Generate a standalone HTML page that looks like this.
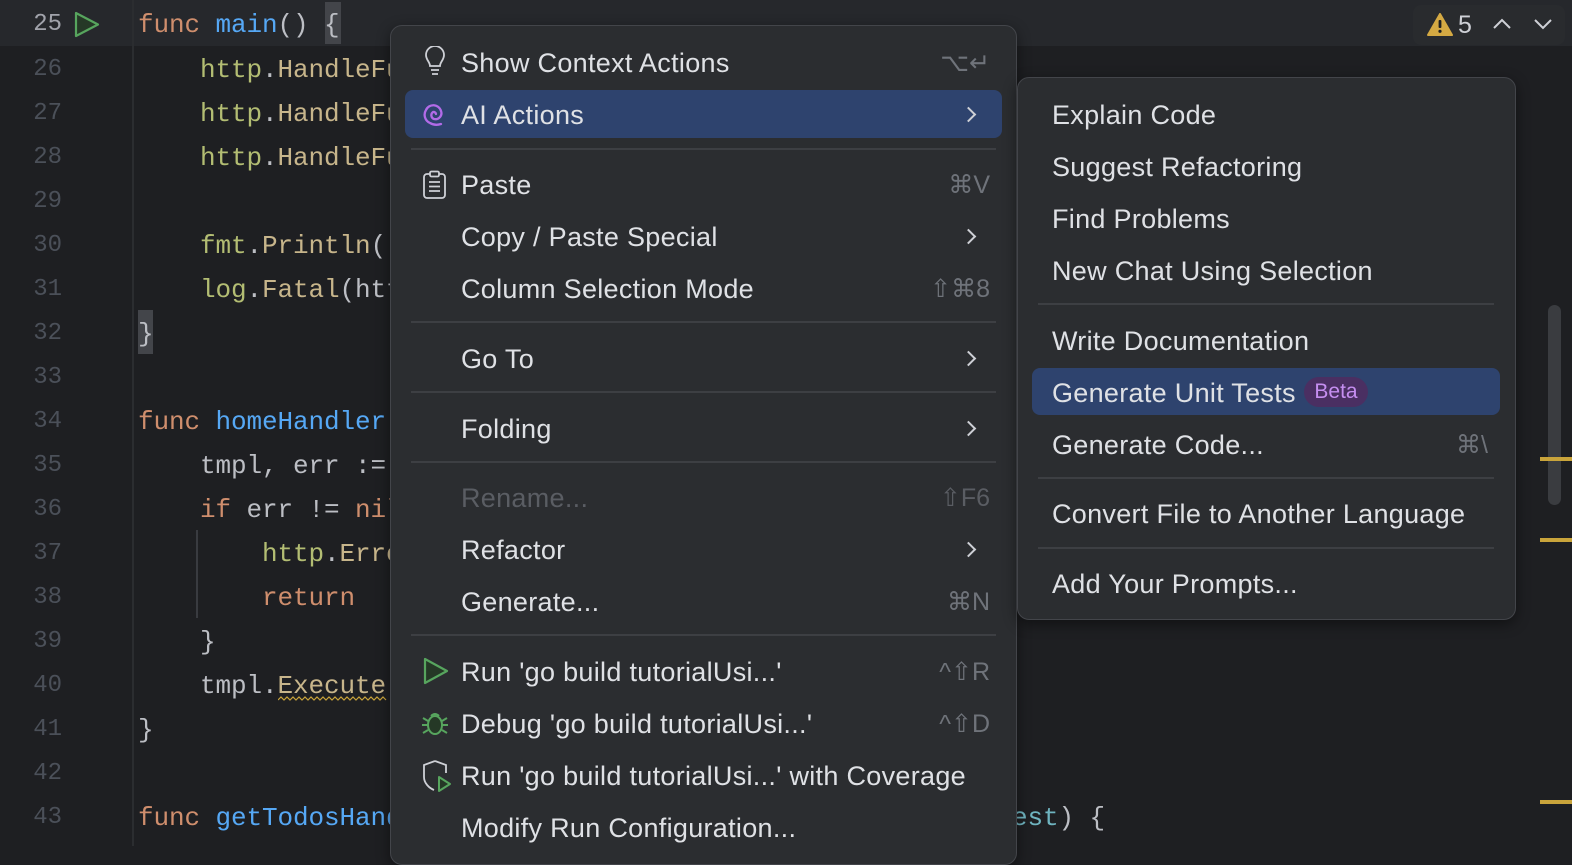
<!DOCTYPE html>
<html><head><meta charset="utf-8">
<style>
*{margin:0;padding:0;box-sizing:border-box}
body{width:1572px;height:846px;overflow:hidden;background:#1e1f22;position:relative;font-family:"Liberation Sans",sans-serif}
.ln{position:absolute;left:30px;width:32px;text-align:right;font:24px "Liberation Mono",monospace;color:#4b5059;line-height:44px}
.code{position:absolute;font:26px "Liberation Mono",monospace;color:#bcbec4;line-height:44px;white-space:pre;letter-spacing:-0.1px}
.k{color:#cf8e6d}.f{color:#56a8f5}.p{color:#b3bd73}.m{color:#c7b58b}.t{color:#6fb4c0}
.menu{position:absolute;background:#2b2d30;border:1.5px solid #43454a;border-radius:12px;box-shadow:0 4px 14px rgba(0,0,0,.45)}
.it{position:absolute;font-size:27px;letter-spacing:0.3px;color:#dfe1e5;line-height:52px;white-space:nowrap}
.sc{position:absolute;font-size:25px;color:#6f737a;line-height:52px;text-align:right;white-space:nowrap}
.sep{position:absolute;height:2px;background:#3d3f43}
.arr{position:absolute;width:11px;height:11px;border-right:2px solid #ced0d6;border-top:2px solid #ced0d6;transform:rotate(45deg)}
svg{position:absolute}
</style></head><body>
<div style="position:absolute;left:0;top:0;width:1572px;height:46px;background:#26282c"></div>
<div style="position:absolute;left:132px;top:0;width:2px;height:846px;background:#2b2d30"></div>
<div style="position:absolute;left:325px;top:2px;width:16px;height:42px;background:#43454a"></div>
<div style="position:absolute;left:138px;top:310px;width:15px;height:44px;background:#43454a"></div>
<div style="position:absolute;left:196px;top:530px;width:2px;height:88px;background:#393b40"></div>

<div class="ln" style="top:3px;color:#a1a3ab">25</div>
<div class="ln" style="top:48px">26</div><div class="ln" style="top:92px">27</div><div class="ln" style="top:136px">28</div>
<div class="ln" style="top:180px">29</div><div class="ln" style="top:224px">30</div><div class="ln" style="top:268px">31</div>
<div class="ln" style="top:312px">32</div><div class="ln" style="top:356px">33</div><div class="ln" style="top:400px">34</div>
<div class="ln" style="top:444px">35</div><div class="ln" style="top:488px">36</div><div class="ln" style="top:532px">37</div>
<div class="ln" style="top:576px">38</div><div class="ln" style="top:620px">39</div><div class="ln" style="top:664px">40</div>
<div class="ln" style="top:708px">41</div><div class="ln" style="top:752px">42</div><div class="ln" style="top:796px">43</div>
<svg style="left:74px;top:11px" width="26" height="27" viewBox="0 0 26 27"><path d="M2 2 L24 13.5 L2 25 Z" fill="#253826" stroke="#57a55e" stroke-width="2.2" stroke-linejoin="round"/></svg>

<div class="code" style="left:138px;top:3px"><span class="k">func</span> <span class="f">main</span>() {</div>
<div class="code" style="left:200px;top:48px"><span class="p">http</span>.<span class="m">HandleFunc</span></div>
<div class="code" style="left:200px;top:92px"><span class="p">http</span>.<span class="m">HandleFunc</span></div>
<div class="code" style="left:200px;top:136px"><span class="p">http</span>.<span class="m">HandleFunc</span></div>
<div class="code" style="left:200px;top:224px"><span class="p">fmt</span>.<span class="m">Println</span>(</div>
<div class="code" style="left:200px;top:268px"><span class="p">log</span>.<span class="m">Fatal</span>(htt</div>
<div class="code" style="left:138px;top:312px">}</div>
<div class="code" style="left:138px;top:400px"><span class="k">func</span> <span class="f">homeHandler</span></div>
<div class="code" style="left:200px;top:444px">tmpl, err :=</div>
<div class="code" style="left:200px;top:488px"><span class="k">if</span> err != <span class="k">nil</span></div>
<div class="code" style="left:262px;top:532px"><span class="p">http</span>.<span class="m">Error</span></div>
<div class="code" style="left:262px;top:576px"><span class="k">return</span></div>
<div class="code" style="left:200px;top:620px">}</div>
<div class="code" style="left:200px;top:664px">tmpl.<span class="m">Execute</span></div>
<svg style="left:278px;top:696px" width="110" height="6"><path d="M0 4 l3 -3 l3 3 l3 -3 l3 3 l3 -3 l3 3 l3 -3 l3 3 l3 -3 l3 3 l3 -3 l3 3 l3 -3 l3 3 l3 -3 l3 3 l3 -3 l3 3 l3 -3 l3 3 l3 -3 l3 3 l3 -3 l3 3 l3 -3 l3 3 l3 -3 l3 3 l3 -3 l3 3 l3 -3 l3 3 l3 -3 l3 3 l3 -3 l3 3" fill="none" stroke="#c9a43b" stroke-width="1.2"/></svg>
<div class="code" style="left:138px;top:708px">}</div>
<div class="code" style="left:138px;top:796px"><span class="k">func</span> <span class="f">getTodosHandler</span></div>
<div class="code" style="left:1012px;top:796px"><span class="t">est</span>) {</div>

<div style="position:absolute;left:1413px;top:5px;width:152px;height:40px;background:#2b2d30;border-radius:8px;opacity:.6"></div>
<svg style="left:1427px;top:13px" width="26" height="24" viewBox="0 0 26 24"><path d="M13 1 L25 22 L1 22 Z" fill="#d4a943" stroke="#d4a943" stroke-width="2" stroke-linejoin="round"/><rect x="11.6" y="7" width="2.8" height="8" rx="1" fill="#1e1f22"/><circle cx="13" cy="18.3" r="1.6" fill="#1e1f22"/></svg>
<div style="position:absolute;left:1458px;top:11px;font-size:25px;color:#ced0d6">5</div>
<svg style="left:1492px;top:18px" width="20" height="12"><path d="M2 10 L10 2 L18 10" fill="none" stroke="#ced0d6" stroke-width="2"/></svg>
<svg style="left:1533px;top:18px" width="20" height="12"><path d="M2 2 L10 10 L18 2" fill="none" stroke="#ced0d6" stroke-width="2"/></svg>
<div style="position:absolute;left:1548px;top:305px;width:13px;height:200px;background:#3a3c40;border-radius:7px"></div>
<div style="position:absolute;left:1540px;top:457px;width:32px;height:4px;background:#c9a43b"></div>
<div style="position:absolute;left:1540px;top:538px;width:32px;height:4px;background:#c9a43b"></div>
<div style="position:absolute;left:1540px;top:800px;width:32px;height:4px;background:#c9a43b"></div>

<div class="menu" style="left:390px;top:25px;width:627px;height:840px"></div>
<div style="position:absolute;left:405px;top:90px;width:597px;height:48px;background:#2e436e;border-radius:8px"></div>
<svg style="left:423px;top:46px" width="24" height="32" viewBox="0 0 24 32"><path d="M7 20 C7 16 3 14 3 9 A9 9 0 0 1 21 9 C21 14 17 16 17 20 Z" fill="none" stroke="#ced0d6" stroke-width="1.8"/><path d="M8 24 H16 M9 28 H15" stroke="#ced0d6" stroke-width="1.8"/></svg>
<svg style="left:421px;top:101px" width="28" height="26" viewBox="0 0 28 26"><path d="M15 13 A2.5 2.5 0 0 0 12 11 A4 4 0 0 0 13 18 A6 6 0 0 0 20 10 A8 8 0 0 0 5 9 A9 9 0 0 0 9 22 Q14 25 20 23" fill="none" stroke="#b26be8" stroke-width="2.3" stroke-linecap="round"/></svg>
<svg style="left:422px;top:170px" width="26" height="30" viewBox="0 0 26 30"><rect x="2" y="4" width="21" height="24" rx="3" fill="none" stroke="#ced0d6" stroke-width="1.8"/><rect x="8" y="1.5" width="9" height="5" rx="1.5" fill="#2b2d30" stroke="#ced0d6" stroke-width="1.8"/><path d="M7 12 H18 M7 16.5 H18 M7 21 H18" stroke="#ced0d6" stroke-width="1.8"/></svg>
<svg style="left:422px;top:657px" width="28" height="28" viewBox="0 0 28 28"><path d="M3 2 L25 14 L3 26 Z" fill="#253826" stroke="#57a55e" stroke-width="2.2" stroke-linejoin="round"/></svg>
<svg style="left:420px;top:708px" width="30" height="30" viewBox="0 0 30 30"><ellipse cx="15" cy="17" rx="7" ry="9" fill="#253826" stroke="#57a55e" stroke-width="2"/><path d="M11 8 Q15 4 19 8 M2 17 H8 M22 17 H28 M3 10 L8 13 M27 10 L22 13 M3 25 L8 22 M27 25 L22 22" fill="none" stroke="#57a55e" stroke-width="2"/></svg>
<svg style="left:422px;top:759px" width="30" height="34" viewBox="0 0 30 34"><path d="M13 2 L24 6 V14 M13 2 L2 6 V18 C2 24 7 29 12 31" fill="none" stroke="#ced0d6" stroke-width="1.8"/><path d="M17 18 L28 25 L17 32 Z" fill="#253826" stroke="#57a55e" stroke-width="2" stroke-linejoin="round"/></svg>

<div class="it" style="left:461px;top:37px">Show Context Actions</div>
<div class="sc" style="left:880px;width:110px;top:37px">⌥↵</div>
<div class="it" style="left:461px;top:89px">AI Actions</div>
<div class="arr" style="left:963px;top:109px"></div>
<div class="sep" style="left:411px;top:148px;width:585px"></div>
<div class="it" style="left:461px;top:159px">Paste</div>
<div class="sc" style="left:880px;width:110px;top:159px">⌘V</div>
<div class="it" style="left:461px;top:211px">Copy / Paste Special</div>
<div class="arr" style="left:963px;top:231px"></div>
<div class="it" style="left:461px;top:263px">Column Selection Mode</div>
<div class="sc" style="left:880px;width:110px;top:263px">⇧⌘8</div>
<div class="sep" style="left:411px;top:321px;width:585px"></div>
<div class="it" style="left:461px;top:333px">Go To</div>
<div class="arr" style="left:963px;top:353px"></div>
<div class="sep" style="left:411px;top:391px;width:585px"></div>
<div class="it" style="left:461px;top:403px">Folding</div>
<div class="arr" style="left:963px;top:423px"></div>
<div class="sep" style="left:411px;top:461px;width:585px"></div>
<div class="it" style="left:461px;top:472px;color:#5a5d63">Rename...</div>
<div class="sc" style="left:880px;width:110px;top:472px;color:#5a5d63">⇧F6</div>
<div class="it" style="left:461px;top:524px">Refactor</div>
<div class="arr" style="left:963px;top:544px"></div>
<div class="it" style="left:461px;top:576px">Generate...</div>
<div class="sc" style="left:880px;width:110px;top:576px">⌘N</div>
<div class="sep" style="left:411px;top:634px;width:585px"></div>
<div class="it" style="left:461px;top:646px">Run 'go build tutorialUsi...'</div>
<div class="sc" style="left:880px;width:110px;top:646px">^⇧R</div>
<div class="it" style="left:461px;top:698px">Debug 'go build tutorialUsi...'</div>
<div class="sc" style="left:880px;width:110px;top:698px">^⇧D</div>
<div class="it" style="left:461px;top:750px">Run 'go build tutorialUsi...' with Coverage</div>
<div class="it" style="left:461px;top:802px">Modify Run Configuration...</div>

<div class="menu" style="left:1017px;top:77px;width:499px;height:543px"></div>
<div style="position:absolute;left:1032px;top:368px;width:468px;height:47px;background:#2e436e;border-radius:8px"></div>
<div class="it" style="left:1052px;top:89px">Explain Code</div>
<div class="it" style="left:1052px;top:141px">Suggest Refactoring</div>
<div class="it" style="left:1052px;top:193px">Find Problems</div>
<div class="it" style="left:1052px;top:245px">New Chat Using Selection</div>
<div class="sep" style="left:1038px;top:303px;width:456px"></div>
<div class="it" style="left:1052px;top:315px">Write Documentation</div>
<div class="it" style="left:1052px;top:367px">Generate Unit Tests</div>
<div style="position:absolute;left:1304px;top:377px;width:64px;height:30px;background:#4a2f62;border-radius:15px;color:#c58ef0;font-size:21px;line-height:30px;text-align:center">Beta</div>
<div class="it" style="left:1052px;top:419px">Generate Code...</div>
<div class="sc" style="left:1380px;width:108px;top:419px">⌘\</div>
<div class="sep" style="left:1038px;top:477px;width:456px"></div>
<div class="it" style="left:1052px;top:488px">Convert File to Another Language</div>
<div class="sep" style="left:1038px;top:547px;width:456px"></div>
<div class="it" style="left:1052px;top:558px">Add Your Prompts...</div>
</body></html>
